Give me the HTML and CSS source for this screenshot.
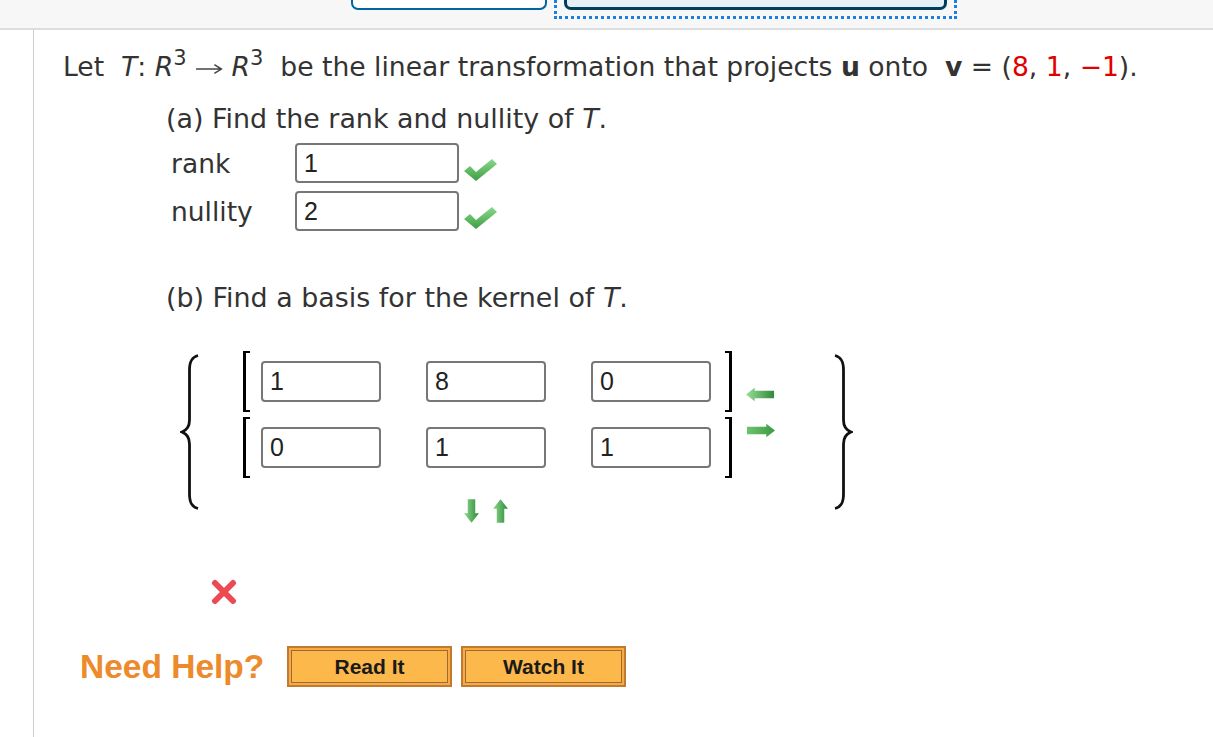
FILE: index.html
```html
<!DOCTYPE html>
<html>
<head>
<meta charset="utf-8">
<link rel="stylesheet" href="styles.css">
</head>
<body>
<div class="topbar">
  <div class="tab tab1"></div>
  <div class="focus"><div class="tab tab2"></div></div>
</div>
<div class="page">
  <p class="q">Let&nbsp; <i>T</i>: <i>R</i><sup>3</sup> <svg class="arr" viewBox="0 0 26 12"><path d="M1 6.5 H24 M18 2.5 L24.5 6.5 L18 10.5" fill="none" stroke="#444" stroke-width="1.4"/></svg> <i>R</i><sup>3</sup>&nbsp; be the linear transformation that projects <b>u</b> onto&nbsp; <b>v</b> = (<span class="red">8</span>, <span class="red">1</span>, <span class="red">−1</span>).</p>
  <div class="part">
    <p class="pa">(a) Find the rank and nullity of <i>T</i>.</p>
    <div class="answers">
      <div class="arow">
        <span class="lbl">rank</span>
        <span class="box">1</span>
        <svg class="check" viewBox="0 0 36 24"><defs><linearGradient id="g1" x1="0" y1="0" x2="0" y2="1"><stop offset="0" stop-color="#8ad98a"/><stop offset="1" stop-color="#3f9e44"/></linearGradient></defs><path d="M2 13 L8 8 L14 14 L30 1 L35 6 L14 23 Z" fill="url(#g1)"/></svg>
      </div>
      <div class="arow">
        <span class="lbl">nullity</span>
        <span class="box">2</span>
        <svg class="check" viewBox="0 0 36 24"><path d="M2 13 L8 8 L14 14 L30 1 L35 6 L14 23 Z" fill="url(#g1)"/></svg>
      </div>
    </div>
    <p class="pb">(b) Find a basis for the kernel of <i>T</i>.</p>
    <div class="matrix">
      <svg class="brace" viewBox="0 0 20 156"><path d="M18 1.5 C12 3 9.5 7 9.5 16 L9.5 66 C9.5 72 7 76 2 78 C7 80 9.5 84 9.5 90 L9.5 140 C9.5 149 12 153 18 154.5" fill="none" stroke="#111" stroke-width="2.8"/></svg>
      <div class="vecs">
        <div class="vrow">
          <span class="bl"></span>
          <span class="cell first">1</span><span class="cell">8</span><span class="cell">0</span>
          <span class="br"></span>
        </div>
        <div class="vrow">
          <span class="bl"></span>
          <span class="cell first">0</span><span class="cell">1</span><span class="cell">1</span>
          <span class="br"></span>
        </div>
        <div class="updown">
          <svg class="va" viewBox="0 0 14 24"><defs><linearGradient id="g2" x1="0" y1="0" x2="1" y2="0"><stop offset="0" stop-color="#8fd88f"/><stop offset="1" stop-color="#2f8a3a"/></linearGradient></defs><path d="M3.5 1 L10.5 1 L10.5 14 L14 14 L7 23 L0 14 L3.5 14 Z" fill="url(#g2)"/></svg>
          <svg class="va" viewBox="0 0 14 24"><path d="M3.5 23 L10.5 23 L10.5 10 L14 10 L7 1 L0 10 L3.5 10 Z" fill="url(#g2)"/></svg>
        </div>
      </div>
      <div class="swap">
        <svg class="ha" viewBox="0 0 30 14"><defs><linearGradient id="g3" x1="0" y1="0" x2="1" y2="0"><stop offset="0" stop-color="#9ade9a"/><stop offset="1" stop-color="#2f8a3a"/></linearGradient><linearGradient id="g4" x1="0" y1="0" x2="1" y2="0"><stop offset="0" stop-color="#6cc46c"/><stop offset="1" stop-color="#3a9a44"/></linearGradient></defs><path d="M0 7 L9 0 L9 3 L29 3 L29 11 L9 11 L9 14 Z" fill="url(#g3)"/></svg>
        <svg class="ha" viewBox="0 0 30 14"><path d="M30 7 L21 0 L21 3 L1 3 L1 11 L21 11 L21 14 Z" fill="url(#g4)"/></svg>
      </div>
      <svg class="brace rb" viewBox="0 0 20 156"><path d="M2 1.5 C8 3 10.5 7 10.5 16 L10.5 66 C10.5 72 13 76 18 78 C13 80 10.5 84 10.5 90 L10.5 140 C10.5 149 8 153 2 154.5" fill="none" stroke="#111" stroke-width="2.8"/></svg>
    </div>
    <div class="xmark">
      <svg viewBox="0 0 26 26"><path d="M4 4 L22 22 M22 4 L4 22" stroke="#ec4a52" stroke-width="6" stroke-linecap="round"/></svg>
    </div>
  </div>
  <div class="help">
    <span class="need">Need Help?</span>
    <span class="btn"><span class="inner">Read It</span></span>
    <span class="btn"><span class="inner">Watch It</span></span>
  </div>
</div>
</body>
</html>
```
FILE: styles.css
```css
html, body {
  margin: 0;
  padding: 0;
  background: #fff;
  height: 100%;
  overflow: hidden;
}
body {
  font-family: "DejaVu Sans", Verdana, sans-serif;
  color: #333;
}
.topbar {
  height: 28px;
  background: #f7f7f7;
  border-bottom: 2px solid #dddddd;
  display: flex;
  align-items: flex-start;
  padding-left: 351px;
}
.tab {
  box-sizing: border-box;
  height: 10px;
  border-radius: 0 0 7px 7px;
}
.tab1 {
  width: 196px;
  background: #fff;
  border: 2.5px solid #00669e;
  border-top: none;
}
.focus {
  box-sizing: border-box;
  margin-left: 7px;
  width: 403px;
  height: 19px;
  border: 3px dotted #1a80e0;
  border-top: none;
  padding: 0 7px;
}
.tab2 {
  width: 100%;
  background: #e6eef6;
  border: 3px solid #003e5e;
  border-top: none;
}
.page {
  margin-left: 33px;
  border-left: 1px solid #cfcfcf;
  height: calc(100% - 30px);
  padding-left: 29px;
  padding-top: 19px;
  box-sizing: border-box;
}
p { margin: 0; }
.q, .pa, .pb {
  font-size: 26.9px;
  line-height: 36px;
  white-space: nowrap;
}
.q { font-size: 26.6px; }
sup {
  font-size: 21px;
  line-height: 0;
  vertical-align: 11px;
}
.arr {
  width: 28px;
  height: 13px;
  vertical-align: 1px;
}
.red { color: #e00000; }
.q b { color: #333; }
.part {
  padding-left: 103px;
}
.pa { margin-top: 16px; }
.answers {
  margin-top: 6px;
  padding-left: 5px;
  display: flex;
  flex-direction: column;
  gap: 8px;
}
.arow {
  display: flex;
  align-items: center;
}
.lbl {
  width: 124px;
  font-size: 26.5px;
}
.box, .cell {
  box-sizing: border-box;
  border: 2px solid #777;
  border-radius: 4px;
  font-family: "Liberation Sans", Arial, sans-serif;
  font-size: 25px;
  color: #222;
  display: flex;
  align-items: center;
  padding-left: 7px;
}
.box {
  width: 164px;
  height: 40px;
}
.check {
  width: 36px;
  height: 24px;
  margin-left: 3px;
  margin-top: 13px;
}
.pb { margin-top: 49px; }
.matrix {
  margin-top: 35px;
  margin-left: 14px;
  display: flex;
  align-items: flex-start;
}
.brace {
  width: 20px;
  height: 156px;
  margin-top: 3px;
}
.vecs {
  margin-left: 43px;
  display: flex;
  flex-direction: column;
  gap: 5px;
}
.vrow {
  display: flex;
  align-items: center;
  height: 61px;
}
.bl, .br {
  box-sizing: border-box;
  width: 7px;
  height: 61px;
  border: 2px solid #000;
  border-left-width: 3px;
}
.bl { border-right: none; }
.br { border-left: none; border-right-width: 3px; }
.cell {
  width: 120px;
  height: 41px;
  margin-left: 45px;
}
.cell.first { margin-left: 11px; }
.vrow .br { margin-left: 14px; }
.updown {
  display: flex;
  justify-content: center;
  gap: 14px;
  margin-top: 15px;
  padding-right: 4px;
}
.va {
  width: 15px;
  height: 26px;
}
.swap {
  margin-left: 14px;
  margin-top: 36px;
  display: flex;
  flex-direction: column;
  gap: 21px;
}
.ha {
  width: 29px;
  height: 15px;
}
.rb { margin-left: 58px; }
.xmark {
  margin-top: 55px;
  padding-left: 45px;
  height: 26px;
}
.xmark svg {
  width: 26px;
  height: 26px;
}
.help {
  margin-top: 41px;
  margin-left: 17px;
  display: flex;
  align-items: center;
}
.need {
  font-family: "Liberation Sans", Arial, sans-serif;
  font-weight: bold;
  font-size: 33.5px;
  color: #ec8a2c;
  width: 207px;
}
.btn {
  box-sizing: border-box;
  width: 165px;
  height: 41px;
  border: 2px solid #c27a30;
  background: #f8ab44;
  padding: 2px;
  margin-right: 9px;
  display: flex;
}
.inner {
  flex: 1;
  border: 1px solid #9b6a35;
  background: #fdb84c;
  display: flex;
  align-items: center;
  justify-content: center;
  font-family: "Liberation Sans", Arial, sans-serif;
  font-weight: bold;
  font-size: 21px;
  color: #1a1a1a;
}
```
